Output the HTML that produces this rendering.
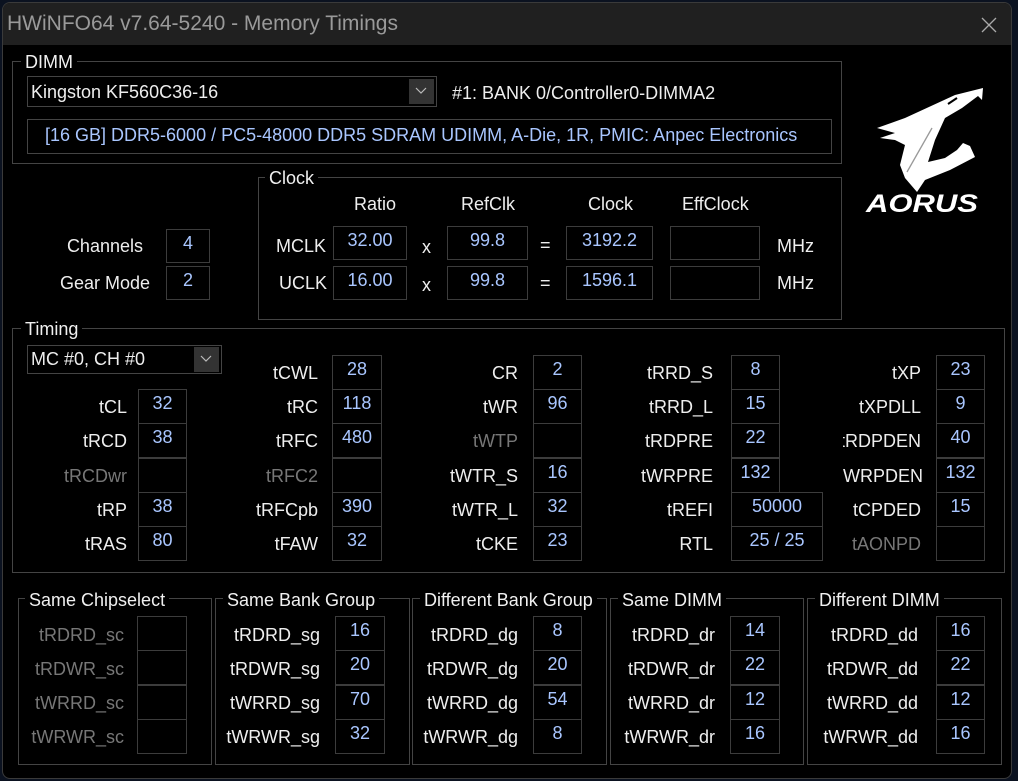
<!DOCTYPE html>
<html><head><meta charset="utf-8"><style>
*{margin:0;padding:0;box-sizing:border-box}
body{width:1018px;height:781px;background:#0b1220;overflow:hidden;font-family:"Liberation Sans",sans-serif;position:relative}
#win{position:absolute;left:2px;top:2px;width:1010px;height:777px;background:#000;border:1px solid #3a3a3a;border-radius:8px;overflow:hidden}
#tb{position:absolute;left:0;top:0;width:100%;height:42px;background:#202020}
.t{position:absolute;color:#eee;font-size:18px;line-height:20px;white-space:nowrap}
.r{text-align:right}
.g{color:#777}
.b{position:absolute;border:1px solid #3c3c3c;color:#a9c6ff;font-size:18px;text-align:center;line-height:26px}
.grp{position:absolute;border:1px solid #444}
.lab{position:absolute;background:#000;color:#f0f0f0;font-size:18px;line-height:20px;padding:0 4px;white-space:nowrap}
</style></head><body>
<div id="win">
<div id="tb"></div>
<div class="t" style="left:4px;top:11px;font-size:21px;color:#9a9a9a">HWiNFO64 v7.64-5240 - Memory Timings</div>
<svg style="position:absolute;left:977px;top:13px" width="18" height="18"><path d="M2 2L16 16M16 2L2 16" stroke="#aaa" stroke-width="1.3"/></svg>
</div>
<div style="position:absolute;left:0;top:0;width:1018px;height:781px">
<!-- DIMM -->
<div class="grp" style="left:12px;top:61px;width:830px;height:103px"></div>
<div class="lab" style="left:21px;top:52px">DIMM</div>
<div style="position:absolute;left:27px;top:76px;width:410px;height:31px;border:1px solid #444"></div>
<div class="t" style="left:31px;top:82px">Kingston KF560C36-16</div>
<div style="position:absolute;left:409px;top:79px;width:25px;height:25px;background:#333"></div>
<svg style="position:absolute;left:414px;top:86px" width="14" height="10"><path d="M2 2L7 7L12 2" stroke="#bbb" fill="none" stroke-width="1.2"/></svg>
<div class="t" style="left:452px;top:83px">#1: BANK 0/Controller0-DIMMA2</div>
<div style="position:absolute;left:27px;top:119px;width:805px;height:35px;border:1px solid #444"></div>
<div class="t" style="left:45px;top:125px;color:#a9c6ff">[16 GB] DDR5-6000 / PC5-48000 DDR5 SDRAM UDIMM, A-Die, 1R, PMIC: Anpec Electronics</div>
<!-- AORUS -->
<svg style="position:absolute;left:862px;top:80px" width="130" height="140">
<path d="M15 48L43 38L93 15L113 10L121 8L120 20L116 16L100 28L83 38L73 60L66 82L83 78L95 70L101 63L108 66L113 77L88 90L63 100L55 112L43 98L38 85L43 65L33 60L18 58L33 53Z" fill="#fff"/>
<path d="M95 18L86 24" stroke="#000" stroke-width="2"/>
<path d="M45 92L70 48" stroke="#999" stroke-width="1.3"/>
<text x="4" y="132" font-family="Liberation Sans" font-weight="bold" font-style="italic" font-size="25" fill="#fff" textLength="112" lengthAdjust="spacingAndGlyphs">AORUS</text>
</svg>
<!-- Clock -->
<div class="grp" style="left:258px;top:177px;width:584px;height:143px"></div>
<div class="lab" style="left:265px;top:168px">Clock</div>
<div class="t" style="left:354px;top:194px">Ratio</div>
<div class="t" style="left:461px;top:194px">RefClk</div>
<div class="t" style="left:588px;top:194px">Clock</div>
<div class="t" style="left:682px;top:194px">EffClock</div>
<div class="t" style="left:276px;top:236px">MCLK</div>
<div class="t" style="left:279px;top:273px">UCLK</div>
<div class="b" style="left:333px;top:226px;width:74px;height:34px">32.00</div>
<div class="b" style="left:447px;top:226px;width:81px;height:34px">99.8</div>
<div class="b" style="left:566px;top:226px;width:87px;height:34px">3192.2</div>
<div class="b" style="left:670px;top:226px;width:90px;height:34px"></div>
<div class="b" style="left:333px;top:266px;width:74px;height:34px">16.00</div>
<div class="b" style="left:447px;top:266px;width:81px;height:34px">99.8</div>
<div class="b" style="left:566px;top:266px;width:87px;height:34px">1596.1</div>
<div class="b" style="left:670px;top:266px;width:90px;height:34px"></div>
<div class="t" style="left:422px;top:237px">x</div><div class="t" style="left:422px;top:275px">x</div>
<div class="t" style="left:540px;top:235px">=</div><div class="t" style="left:540px;top:273px">=</div>
<div class="t" style="left:777px;top:236px">MHz</div><div class="t" style="left:777px;top:273px">MHz</div>
<div class="t r" style="left:40px;width:103px;top:236px">Channels</div>
<div class="t r" style="left:40px;width:110px;top:273px">Gear Mode</div>
<div class="b" style="left:166px;top:229px;width:44px;height:34px">4</div>
<div class="b" style="left:166px;top:266px;width:44px;height:34px">2</div>
<!-- Timing -->
<div class="grp" style="left:12px;top:328px;width:993px;height:245px"></div>
<div class="lab" style="left:21px;top:319px">Timing</div>
<div style="position:absolute;left:27px;top:345px;width:195px;height:29px;border:1px solid #444"></div>
<div class="t" style="left:31px;top:349px">MC #0, CH #0</div>
<div style="position:absolute;left:194px;top:347px;width:25px;height:25px;background:#333"></div>
<svg style="position:absolute;left:199px;top:354px" width="14" height="10"><path d="M2 2L7 7L12 2" stroke="#bbb" fill="none" stroke-width="1.2"/></svg>

<!-- col1 -->
<div class="t r" style="left:27px;width:100px;top:397px">tCL</div><div class="b" style="left:138px;top:389px;width:49px;height:35px">32</div>
<div class="t r" style="left:27px;width:100px;top:431px">tRCD</div><div class="b" style="left:138px;top:423px;width:49px;height:35px">38</div>
<div class="t r g" style="left:27px;width:100px;top:466px">tRCDwr</div><div class="b" style="left:138px;top:458px;width:49px;height:35px"></div>
<div class="t r" style="left:27px;width:100px;top:500px">tRP</div><div class="b" style="left:138px;top:492px;width:49px;height:35px">38</div>
<div class="t r" style="left:27px;width:100px;top:534px">tRAS</div><div class="b" style="left:138px;top:526px;width:49px;height:35px">80</div>
<!-- col2 -->
<div class="t r" style="left:218px;width:100px;top:363px">tCWL</div><div class="b" style="left:332px;top:355px;width:50px;height:35px">28</div>
<div class="t r" style="left:218px;width:100px;top:397px">tRC</div><div class="b" style="left:332px;top:389px;width:50px;height:35px">118</div>
<div class="t r" style="left:218px;width:100px;top:431px">tRFC</div><div class="b" style="left:332px;top:423px;width:50px;height:35px">480</div>
<div class="t r g" style="left:218px;width:100px;top:466px">tRFC2</div><div class="b" style="left:332px;top:458px;width:50px;height:35px"></div>
<div class="t r" style="left:218px;width:100px;top:500px">tRFCpb</div><div class="b" style="left:332px;top:492px;width:50px;height:35px">390</div>
<div class="t r" style="left:218px;width:100px;top:534px">tFAW</div><div class="b" style="left:332px;top:526px;width:50px;height:35px">32</div>
<!-- col3 -->
<div class="t r" style="left:418px;width:100px;top:363px">CR</div><div class="b" style="left:533px;top:355px;width:49px;height:35px">2</div>
<div class="t r" style="left:418px;width:100px;top:397px">tWR</div><div class="b" style="left:533px;top:389px;width:49px;height:35px">96</div>
<div class="t r g" style="left:418px;width:100px;top:431px">tWTP</div><div class="b" style="left:533px;top:423px;width:49px;height:35px"></div>
<div class="t r" style="left:418px;width:100px;top:466px">tWTR_S</div><div class="b" style="left:533px;top:458px;width:49px;height:35px">16</div>
<div class="t r" style="left:418px;width:100px;top:500px">tWTR_L</div><div class="b" style="left:533px;top:492px;width:49px;height:35px">32</div>
<div class="t r" style="left:418px;width:100px;top:534px">tCKE</div><div class="b" style="left:533px;top:526px;width:49px;height:35px">23</div>
<!-- col4 -->
<div class="t r" style="left:613px;width:100px;top:363px">tRRD_S</div><div class="b" style="left:731px;top:355px;width:49px;height:35px">8</div>
<div class="t r" style="left:613px;width:100px;top:397px">tRRD_L</div><div class="b" style="left:731px;top:389px;width:49px;height:35px">15</div>
<div class="t r" style="left:613px;width:100px;top:431px">tRDPRE</div><div class="b" style="left:731px;top:423px;width:49px;height:35px">22</div>
<div class="t r" style="left:613px;width:100px;top:466px">tWRPRE</div><div class="b" style="left:731px;top:458px;width:49px;height:35px">132</div>
<div class="t r" style="left:613px;width:100px;top:500px">tREFI</div><div class="b" style="left:731px;top:492px;width:92px;height:35px">50000</div>
<div class="t r" style="left:613px;width:100px;top:534px">RTL</div><div class="b" style="left:731px;top:526px;width:92px;height:35px">25 / 25</div>
<!-- col5 -->
<div style="position:absolute;left:843px;top:350px;width:80px;height:215px;overflow:hidden">
<div class="t r" style="left:-40px;width:118px;top:13px">tXP</div>
<div class="t r" style="left:-40px;width:118px;top:47px">tXPDLL</div>
<div class="t r" style="left:-40px;width:118px;top:81px">tRDPDEN</div>
<div class="t r" style="left:-40px;width:120px;top:116px">tWRPDEN</div>
<div class="t r" style="left:-40px;width:118px;top:150px">tCPDED</div>
<div class="t r g" style="left:-40px;width:118px;top:184px">tAONPD</div>
</div>
<div class="b" style="left:936px;top:355px;width:49px;height:35px">23</div>
<div class="b" style="left:936px;top:389px;width:49px;height:35px">9</div>
<div class="b" style="left:936px;top:423px;width:49px;height:35px">40</div>
<div class="b" style="left:936px;top:458px;width:49px;height:35px">132</div>
<div class="b" style="left:936px;top:492px;width:49px;height:35px">15</div>
<div class="b" style="left:936px;top:526px;width:49px;height:35px"></div>

<!-- bottom groups -->
<div class="grp" style="left:18px;top:598px;width:194px;height:167px"></div><div class="lab" style="left:25px;top:590px">Same Chipselect</div>
<div class="grp" style="left:215px;top:598px;width:195px;height:167px"></div><div class="lab" style="left:223px;top:590px">Same Bank Group</div>
<div class="grp" style="left:412px;top:598px;width:195px;height:167px"></div><div class="lab" style="left:420px;top:590px">Different Bank Group</div>
<div class="grp" style="left:610px;top:598px;width:194px;height:167px"></div><div class="lab" style="left:618px;top:590px">Same DIMM</div>
<div class="grp" style="left:807px;top:598px;width:195px;height:167px"></div><div class="lab" style="left:815px;top:590px">Different DIMM</div>

<div class="t r g" style="left:20px;width:104px;top:625px">tRDRD_sc</div><div class="b" style="left:137px;top:616px;width:50px;height:35px"></div>
<div class="t r g" style="left:20px;width:104px;top:659px">tRDWR_sc</div><div class="b" style="left:137px;top:650px;width:50px;height:35px"></div>
<div class="t r g" style="left:20px;width:104px;top:693px">tWRRD_sc</div><div class="b" style="left:137px;top:685px;width:50px;height:35px"></div>
<div class="t r g" style="left:20px;width:104px;top:727px">tWRWR_sc</div><div class="b" style="left:137px;top:719px;width:50px;height:35px"></div>

<div class="t r" style="left:210px;width:110px;top:625px">tRDRD_sg</div><div class="b" style="left:335px;top:616px;width:50px;height:35px">16</div>
<div class="t r" style="left:210px;width:110px;top:659px">tRDWR_sg</div><div class="b" style="left:335px;top:650px;width:50px;height:35px">20</div>
<div class="t r" style="left:210px;width:110px;top:693px">tWRRD_sg</div><div class="b" style="left:335px;top:685px;width:50px;height:35px">70</div>
<div class="t r" style="left:210px;width:110px;top:727px">tWRWR_sg</div><div class="b" style="left:335px;top:719px;width:50px;height:35px">32</div>

<div class="t r" style="left:408px;width:110px;top:625px">tRDRD_dg</div><div class="b" style="left:533px;top:616px;width:49px;height:35px">8</div>
<div class="t r" style="left:408px;width:110px;top:659px">tRDWR_dg</div><div class="b" style="left:533px;top:650px;width:49px;height:35px">20</div>
<div class="t r" style="left:408px;width:110px;top:693px">tWRRD_dg</div><div class="b" style="left:533px;top:685px;width:49px;height:35px">54</div>
<div class="t r" style="left:408px;width:110px;top:727px">tWRWR_dg</div><div class="b" style="left:533px;top:719px;width:49px;height:35px">8</div>

<div class="t r" style="left:605px;width:110px;top:625px">tRDRD_dr</div><div class="b" style="left:730px;top:616px;width:50px;height:35px">14</div>
<div class="t r" style="left:605px;width:110px;top:659px">tRDWR_dr</div><div class="b" style="left:730px;top:650px;width:50px;height:35px">22</div>
<div class="t r" style="left:605px;width:110px;top:693px">tWRRD_dr</div><div class="b" style="left:730px;top:685px;width:50px;height:35px">12</div>
<div class="t r" style="left:605px;width:110px;top:727px">tWRWR_dr</div><div class="b" style="left:730px;top:719px;width:50px;height:35px">16</div>

<div class="t r" style="left:808px;width:110px;top:625px">tRDRD_dd</div><div class="b" style="left:936px;top:616px;width:49px;height:35px">16</div>
<div class="t r" style="left:808px;width:110px;top:659px">tRDWR_dd</div><div class="b" style="left:936px;top:650px;width:49px;height:35px">22</div>
<div class="t r" style="left:808px;width:110px;top:693px">tWRRD_dd</div><div class="b" style="left:936px;top:685px;width:49px;height:35px">12</div>
<div class="t r" style="left:808px;width:110px;top:727px">tWRWR_dd</div><div class="b" style="left:936px;top:719px;width:49px;height:35px">16</div>
</div>
</body></html>
